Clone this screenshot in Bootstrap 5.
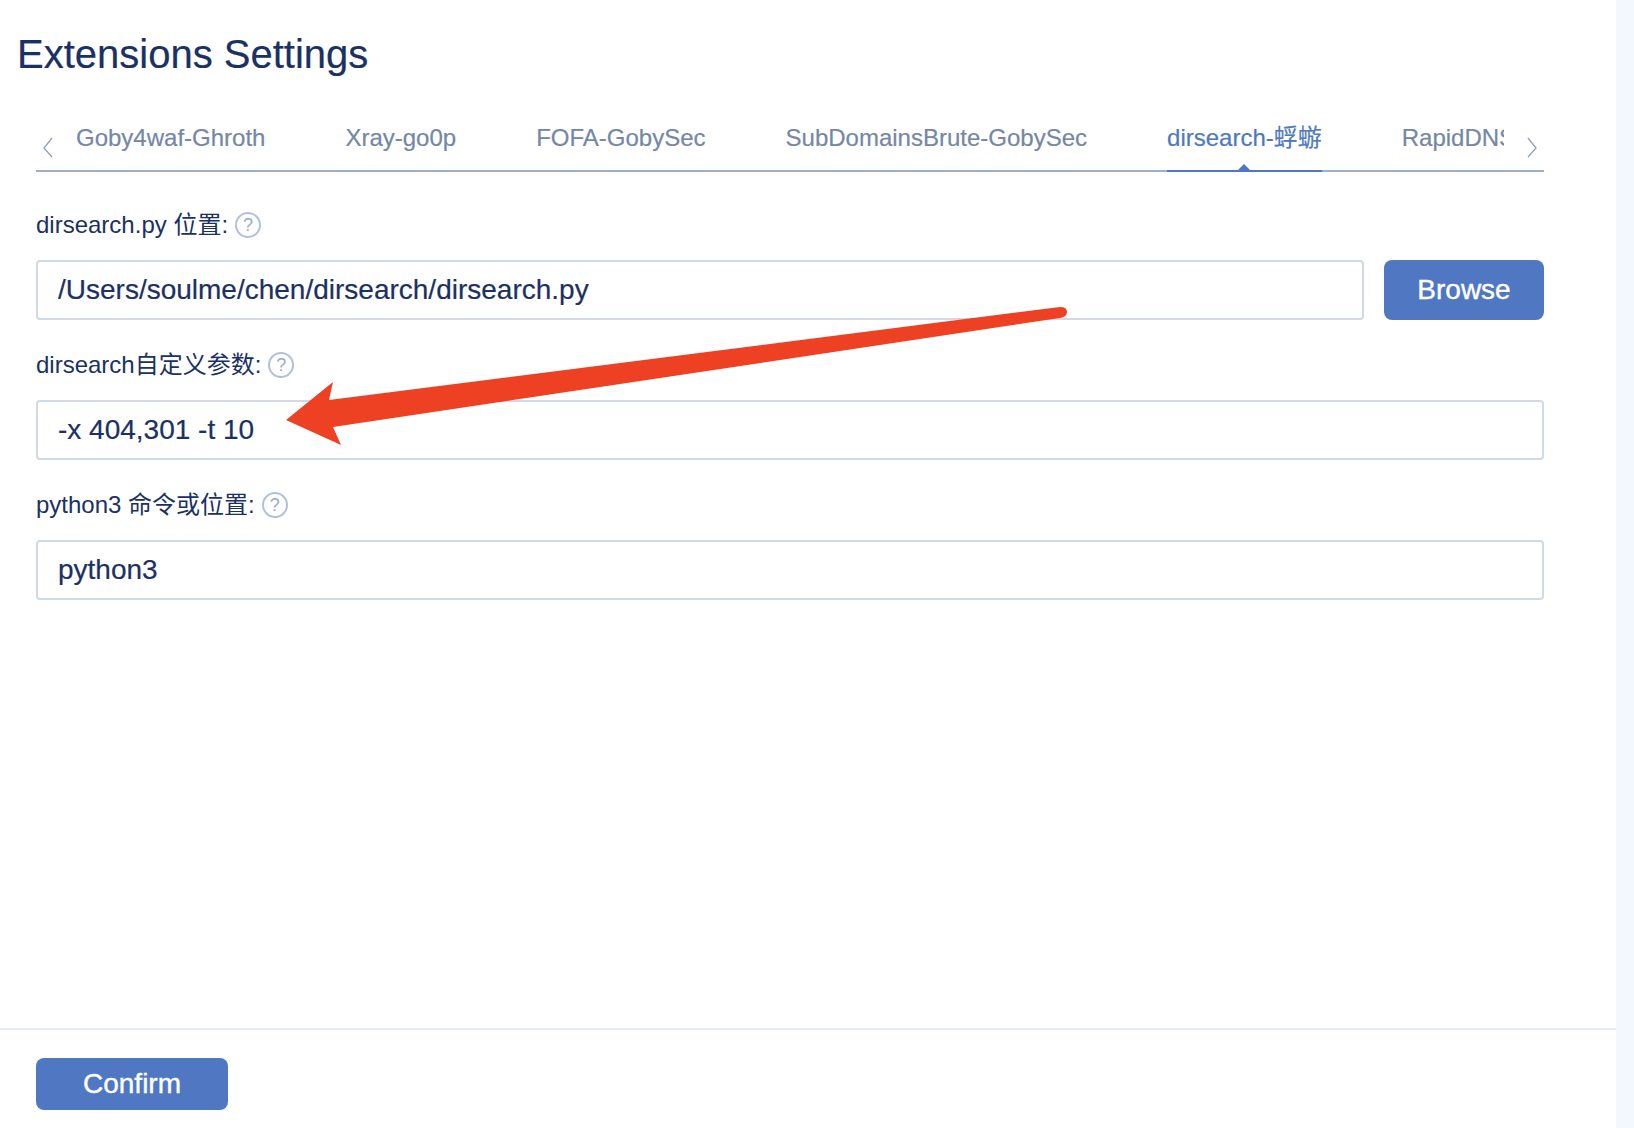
<!DOCTYPE html>
<html lang="en">
<head>
<meta charset="utf-8">
<title>Extensions Settings</title>
<link href="https://cdn.jsdelivr.net/npm/bootstrap@5.3.0/dist/css/bootstrap.min.css" rel="stylesheet">
<style>
html,body{height:100%;}
body{background:#f3f7fe;font-family:"Liberation Sans","Noto Sans CJK SC",sans-serif;color:#1b3163;overflow:hidden;}
.shell{width:1616px;height:1128px;background:#fff;position:relative;padding-top:32px;}
.page-title{font-size:40px;line-height:44px;font-weight:400;color:#1b3163;margin:0 0 0 17px;-webkit-text-stroke:.2px #1b3163;}
.form-zone{padding:0 72px 0 36px;}
.tabs-strip{margin-top:38px;height:58px;border-bottom:2px solid #a0aecb;}
.tabs-clip{width:1428px;height:58px;margin-left:26px;overflow:hidden;}
.tab-item{font-size:24px;line-height:28px;color:#7587a6;white-space:nowrap;height:58px;padding-top:10px;position:relative;flex:none;-webkit-text-stroke:.2px #7587a6;}
.tab-item.on{color:#4f78c2;-webkit-text-stroke:.2px #4f78c2;}
.tab-item.on::after{content:"";position:absolute;left:0;right:0;bottom:0;height:2px;background:#4f78c2;}
.tab-item.on::before{content:"";position:absolute;left:50%;margin-left:-6px;bottom:2px;border-left:6px solid transparent;border-right:6px solid transparent;border-bottom:6px solid #4f78c2;}
.chev{flex:none;width:14px;height:24px;margin-top:21px;}
.chev-left{margin-left:5px;margin-right:-5px;}
.chev-right{margin-left:21px;}
.field-label{font-size:24px;line-height:30px;color:#1b3163;margin-bottom:20px;column-gap:7px;}
.help-dot{width:26px;height:26px;border:2px solid #b1c0dc;border-radius:50%;color:#98aacd;font-size:18px;line-height:22px;text-align:center;flex:none;}
.field-input.form-control{height:60px;font-size:28px;color:#1b3163;border:2px solid #d0d9e6;border-radius:4px;padding:0 20px;font-family:inherit;background:#fff;-webkit-text-stroke:.2px #1b3163;}
.act-btn.btn{background:#5078c2;border:0;border-radius:8px;color:#fff;font-size:28px;font-weight:400;padding:0;-webkit-text-stroke:.4px #fff;}
.browse-btn{width:160px;height:60px;flex:none;}
.confirm-btn{width:192px;height:52px;}
.input-row{column-gap:20px;}
.tabs-clip{column-gap:80px;}
.foot-bar{position:absolute;left:0;right:0;top:1028px;border-top:2px solid #e6ebf6;padding:28px 36px 0;}
.arrow-over{position:absolute;left:0;top:0;pointer-events:none;}
.first-group{margin-top:38px;}
.next-group{margin-top:30px;}
</style>
</head>
<body>
<div class="shell">
  <h1 class="page-title">Extensions Settings</h1>
  <div class="form-zone">
    <div class="tabs-strip d-flex align-items-start">
      <svg class="chev chev-left" viewBox="0 0 14 24" fill="none" stroke="#939fb6" stroke-width="1.3"><path d="M11 3 L3 13 L11 22"/></svg>
      <div class="tabs-clip d-flex">
        <div class="tab-item">Goby4waf-Ghroth</div>
        <div class="tab-item">Xray-go0p</div>
        <div class="tab-item">FOFA-GobySec</div>
        <div class="tab-item">SubDomainsBrute-GobySec</div>
        <div class="tab-item on">dirsearch-蜉蝣</div>
        <div class="tab-item">RapidDNS-GobySec</div>
      </div>
      <svg class="chev chev-right" viewBox="0 0 14 24" fill="none" stroke="#939fb6" stroke-width="1.3"><path d="M3 3 L11 13 L3 22"/></svg>
    </div>

    <div class="first-group">
      <div class="field-label d-flex align-items-center"><span>dirsearch.py 位置:</span><span class="help-dot">?</span></div>
      <div class="d-flex input-row">
        <input class="form-control field-input" type="text" value="/Users/soulme/chen/dirsearch/dirsearch.py">
        <button class="btn act-btn browse-btn" type="button">Browse</button>
      </div>
    </div>

    <div class="next-group">
      <div class="field-label d-flex align-items-center"><span>dirsearch自定义参数:</span><span class="help-dot">?</span></div>
      <input class="form-control field-input" type="text" value="-x 404,301 -t 10">
    </div>

    <div class="next-group">
      <div class="field-label d-flex align-items-center"><span>python3 命令或位置:</span><span class="help-dot">?</span></div>
      <input class="form-control field-input" type="text" value="python3">
    </div>
  </div>

  <div class="foot-bar">
    <button class="btn act-btn confirm-btn" type="button">Confirm</button>
  </div>

  <svg class="arrow-over" width="1634" height="1128" viewBox="0 0 1634 1128">
    <path fill="#ee4023" d="M286 420 L333 382 L329 400 L1060 307 Q1067 307 1067 312 Q1067 317 1060 318 L333 427 L341 445 Z"/>
  </svg>
</div>
<script src="https://cdn.jsdelivr.net/npm/bootstrap@5.3.0/dist/js/bootstrap.bundle.min.js"></script>
</body>
</html>
